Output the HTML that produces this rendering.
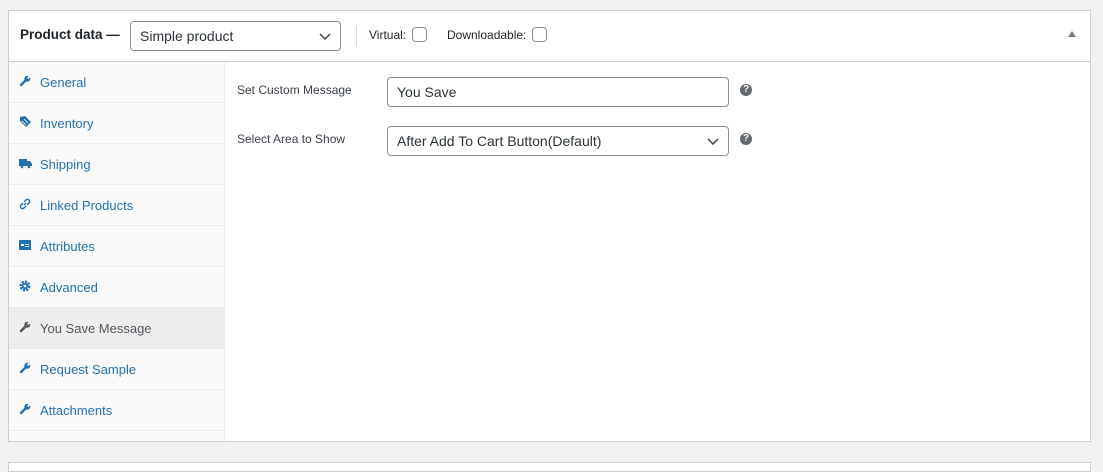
<!DOCTYPE html>
<html><head><meta charset="utf-8"><style>
*{box-sizing:border-box;margin:0;padding:0}
body{width:1103px;height:464px;background:#f1f1f1;font-family:"Liberation Sans",sans-serif;font-size:13px;color:#3c434a;position:relative;overflow:hidden}
.panel{position:absolute;left:8px;top:10px;width:1083px;height:432px;background:#fff;border:1px solid #ccd0d4}
.head{height:51px;border-bottom:1px solid #ccd0d4;position:relative}
.title{position:absolute;left:11px;top:16px;font-size:13.5px;font-weight:bold;color:#1d2327}
.sel{position:absolute;border:1px solid #8c8f94;border-radius:4px;background:#fff;color:#2c3338;font-size:14px;padding-left:9px}
.chev{position:absolute;right:9px;top:50%;margin-top:-5px}
.sep{position:absolute;left:347px;top:15px;width:1px;height:20px;background:#dcdcde}
.lbl{position:absolute;top:17px;font-size:12px;color:#1d2327}
.cb{position:absolute;top:16px;width:15px;height:15px;border:1px solid #8c8f94;border-radius:4px;background:#fff}
.tri{position:absolute;right:14px;top:20px;width:0;height:0;border-left:4px solid transparent;border-right:4px solid transparent;border-bottom:6px solid #787c82}
.side{position:absolute;left:0;top:51px;width:216px;height:379px;background:#fafafa;border-right:1px solid #eee}
.item{height:41px;border-bottom:1px solid #eee;position:relative;color:#2271b1}
.item span{position:absolute;left:31px;top:13px}
.item svg{position:absolute;left:10px;top:13px}
.item.act{background:#eee;color:#50575e}
.flbl{position:absolute;left:228px;font-size:12px;color:#3c434a}
.help{position:absolute;left:731px;width:12px;height:12px;border-radius:50%;background:#646970;color:#fff;font-size:10px;font-weight:bold;text-align:center;line-height:12px}
.bot{position:absolute;left:8px;top:462px;width:1083px;height:10px;background:#fff;border:1px solid #ccd0d4}
</style></head><body>
<div class="panel">
 <div class="head">
  <div class="title">Product data —</div>
  <div class="sel" style="left:121px;top:10px;width:211px;height:30px;line-height:28px">Simple product
   <svg class="chev" width="12" height="10" viewBox="0 0 12 10"><path d="M1 3l5 5 5-5" fill="none" stroke="#50575e" stroke-width="1.6"/></svg></div>
  <div class="sep"></div>
  <div class="lbl" style="left:360px">Virtual:</div><div class="cb" style="left:403px"></div>
  <div class="lbl" style="left:438px">Downloadable:</div><div class="cb" style="left:523px"></div>
  <div class="tri"></div>
 </div>
 <div class="side">
  <div class="item"><svg width="12" height="12" viewBox="0 0 12 12"><path d="M2 10L7 5" stroke="#2271b1" stroke-width="2.4" stroke-linecap="round"/><circle cx="8.3" cy="3.7" r="3" fill="#2271b1"/><path d="M8.6 3.4L12 0" stroke="#fafafa" stroke-width="2"/></svg><span>General</span></div>
  <div class="item"><svg width="12" height="12" viewBox="0 0 12 12"><path d="M6 0l6 6-5 5-6-6V1z" fill="#2271b1"/><path d="M3 5l4 4M5 3l4 4" stroke="#fff" stroke-width=".8"/></svg><span>Inventory</span></div>
  <div class="item"><svg width="13" height="12" viewBox="0 0 13 12"><path d="M0 2h8v7H0zM8 4h3l2 3v2H8z" fill="#2271b1"/><circle cx="3" cy="10" r="1.3" fill="#2271b1"/><circle cx="10" cy="10" r="1.3" fill="#2271b1"/></svg><span>Shipping</span></div>
  <div class="item"><svg width="12" height="12" viewBox="0 0 12 12"><path d="M5 7l2-2M4 5L2 7a2 2 0 0 0 3 3l2-2M8 7l2-2a2 2 0 0 0-3-3L5 4" fill="none" stroke="#2271b1" stroke-width="1.4"/></svg><span>Linked Products</span></div>
  <div class="item"><svg width="12" height="12" viewBox="0 0 12 12"><rect x="0" y="1" width="12" height="10" fill="#2271b1"/><rect x="2" y="5" width="3" height="2" fill="#fff"/><rect x="6" y="5" width="4" height="1" fill="#fff"/><rect x="6" y="7" width="4" height="1" fill="#fff"/></svg><span>Attributes</span></div>
  <div class="item"><svg width="12" height="12" viewBox="0 0 12 12"><circle cx="6" cy="6" r="4" fill="none" stroke="#2271b1" stroke-width="3" stroke-dasharray="2 1.1"/><circle cx="6" cy="6" r="3.2" fill="#2271b1"/><circle cx="6" cy="6" r="1.4" fill="#fafafa"/></svg><span>Advanced</span></div>
  <div class="item act"><svg width="12" height="12" viewBox="0 0 12 12"><path d="M2 10L7 5" stroke="#50575e" stroke-width="2.4" stroke-linecap="round"/><circle cx="8.3" cy="3.7" r="3" fill="#50575e"/><path d="M8.6 3.4L12 0" stroke="#eee" stroke-width="2"/></svg><span>You Save Message</span></div>
  <div class="item"><svg width="12" height="12" viewBox="0 0 12 12"><path d="M2 10L7 5" stroke="#2271b1" stroke-width="2.4" stroke-linecap="round"/><circle cx="8.3" cy="3.7" r="3" fill="#2271b1"/><path d="M8.6 3.4L12 0" stroke="#fafafa" stroke-width="2"/></svg><span>Request Sample</span></div>
  <div class="item"><svg width="12" height="12" viewBox="0 0 12 12"><path d="M2 10L7 5" stroke="#2271b1" stroke-width="2.4" stroke-linecap="round"/><circle cx="8.3" cy="3.7" r="3" fill="#2271b1"/><path d="M8.6 3.4L12 0" stroke="#fafafa" stroke-width="2"/></svg><span>Attachments</span></div>
 </div>
 <div class="flbl" style="top:72px">Set Custom Message</div>
 <div class="sel" style="left:378px;top:66px;width:342px;height:30px;line-height:28px">You Save</div>
 <div class="help" style="top:73px">?</div>
 <div class="flbl" style="top:121px">Select Area to Show</div>
 <div class="sel" style="left:378px;top:115px;width:342px;height:30px;line-height:28px">After Add To Cart Button(Default)
  <svg class="chev" width="12" height="10" viewBox="0 0 12 10"><path d="M1 3l5 5 5-5" fill="none" stroke="#50575e" stroke-width="1.6"/></svg></div>
 <div class="help" style="top:122px">?</div>
</div>
<div class="bot"></div>
</body></html>
